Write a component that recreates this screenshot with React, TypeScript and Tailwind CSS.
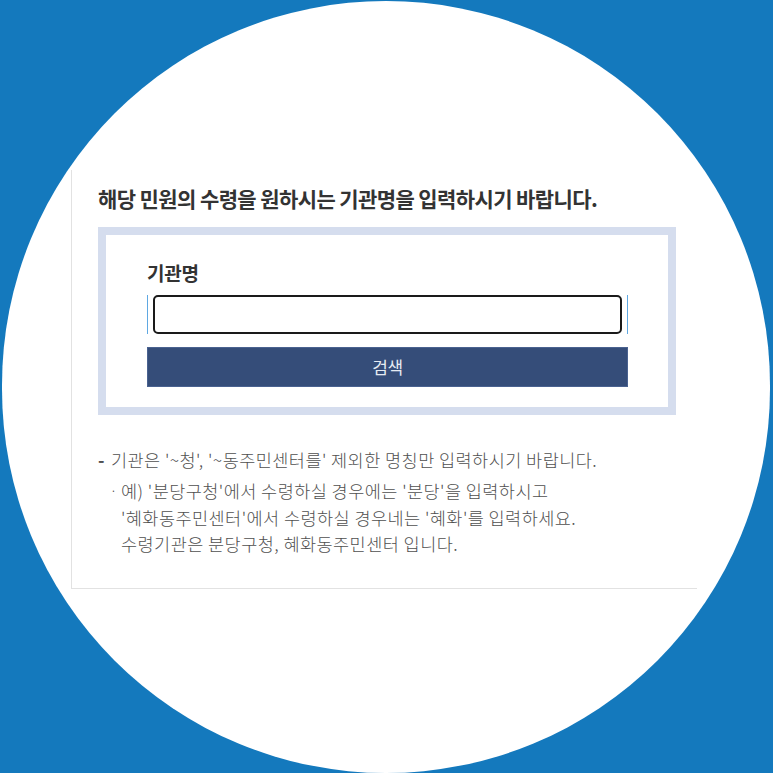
import React, { useState } from 'react';

export default function App() {
  const [name, setName] = useState('');

  return (
    <div className="w-[773px] h-[773px] overflow-hidden bg-[#1479bd] pt-px pl-[2px]">
      <div
        className="w-[768px] h-[772px] rounded-full bg-white"
        style={{ fontFamily: '"Noto Sans CJK KR", "Noto Sans", sans-serif' }}
      >
        <div className="ml-[69px] pt-[169px] w-[626px]">
          <div className="h-[419px] border-l border-b border-[#e2e2e2] pl-[26px] pt-[12px]">
            <h2 className="text-[21px] leading-[32px] font-bold tracking-[-0.6px] text-[#333]">
              해당 민원의 수령을 원하시는 기관명을 입력하시기 바랍니다.
            </h2>

            <div className="mt-[13px] w-[578px] h-[188px] border-[8px] border-[#d5ddee] pl-[41px] pr-[40px] pt-[26px]">
              <label className="block text-[19px] leading-[24px] font-bold tracking-[-0.2px] text-[#333]">
                기관명
              </label>
              <div className="mt-[10px] h-[39px] border-x border-[#5fa8e2] flex">
                <input
                  type="text"
                  value={name}
                  onChange={(e) => setName(e.target.value)}
                  className="mx-[5px] flex-1 h-[39px] border-2 border-[#1a1a1a] rounded-[5px] bg-white outline-none px-2 text-[16px]"
                />
              </div>
              <button
                type="button"
                className="mt-[13px] w-full h-[40px] bg-[#354d79] border border-[#4a6290] text-[17px] leading-[36px] text-[#e6ebf3] tracking-[-0.3px]"
              >
                검색
              </button>
            </div>

            <div className="mt-[31px] text-[17.5px] font-light tracking-[0.45px] text-[#505050]">
              <p className="leading-[27px]">
                <span className="font-bold mr-[6px]">-</span>기관은 '~청', '~동주민센터를' 제외한 명칭만 입력하시기 바랍니다.
              </p>
              <div className="mt-[5px] pl-[12px] flex">
                <span className="w-[11px] shrink-0 leading-[26px] text-[13px]">·</span>
                <div className="leading-[26.5px]">
                  <p>예) '분당구청'에서 수령하실 경우에는 '분당'을 입력하시고</p>
                  <p>'혜화동주민센터'에서 수령하실 경우네는 '혜화'를 입력하세요.</p>
                  <p>수령기관은 분당구청, 혜화동주민센터 입니다.</p>
                </div>
              </div>
            </div>
          </div>
        </div>
      </div>
    </div>
  );
}
